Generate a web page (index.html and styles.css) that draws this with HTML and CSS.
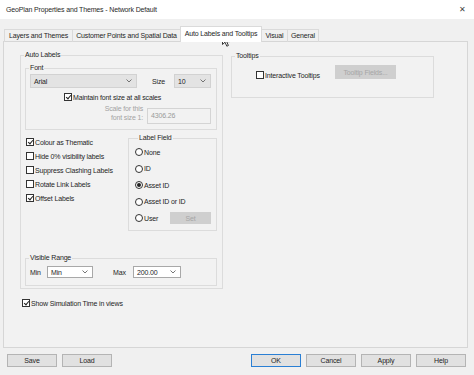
FILE: index.html
```html
<!DOCTYPE html>
<html lang="en">
<head>
  <meta charset="UTF-8">
  <title>GeoPlan Properties and Themes - Network Default</title>
  <link rel="stylesheet" href="styles.css">
</head>
<body>
  <div class="titlebar">
    <span class="title">GeoPlan Properties and Themes - Network Default</span>
    <span class="close">&#x2715;</span>
  </div>

  <div class="tabs">
    <div class="tab tab-layers">Layers and Themes</div>
    <div class="tab tab-customer">Customer Points and Spatial Data</div>
    <div class="tab tab-auto active">Auto Labels and Tooltips</div>
    <div class="tab tab-visual">Visual</div>
    <div class="tab tab-general">General</div>
  </div>

  <div class="panel">
    <div class="col-left">
      <fieldset class="group auto-labels">
        <legend>Auto Labels</legend>

        <fieldset class="group font-group">
          <legend>Font</legend>
          <div class="font-row">
            <div class="combo font-combo"><span>Arial</span><svg class="chev" width="6" height="4" viewBox="0 0 6 4"><polyline points="0.5,0.5 3,3 5.5,0.5" fill="none" stroke="#666" stroke-width="0.9"/></svg></div>
            <span class="size-label">Size</span>
            <div class="combo size-combo"><span>10</span><svg class="chev" width="6" height="4" viewBox="0 0 6 4"><polyline points="0.5,0.5 3,3 5.5,0.5" fill="none" stroke="#666" stroke-width="0.9"/></svg></div>
          </div>
          <div class="check maintain"><span class="box checked"></span>Maintain font size at all scales</div>
          <div class="scale-row">
            <div class="scale-label">Scale for this<br>font size 1:</div>
            <div class="textbox">4306.26</div>
          </div>
        </fieldset>

        <div class="options">
          <div class="checks">
            <div class="check"><span class="box checked"></span>Colour as Thematic</div>
            <div class="check"><span class="box"></span>Hide 0% visibility labels</div>
            <div class="check"><span class="box"></span>Suppress Clashing Labels</div>
            <div class="check"><span class="box"></span>Rotate Link Labels</div>
            <div class="check"><span class="box checked"></span>Offset Labels</div>
          </div>
          <fieldset class="group label-field">
            <legend>Label Field</legend>
            <div class="radio"><span class="dot"></span>None</div>
            <div class="radio"><span class="dot"></span>ID</div>
            <div class="radio"><span class="dot on"></span>Asset ID</div>
            <div class="radio"><span class="dot"></span>Asset ID or ID</div>
            <div class="radio"><span class="dot"></span>User<span class="btn disabled set-btn">Set</span></div>
          </fieldset>
        </div>

        <fieldset class="group range">
          <legend>Visible Range</legend>
          <div class="range-row">
            <span class="min-label">Min</span>
            <div class="combo min-combo white"><span>Min</span><svg class="chev" width="6" height="4" viewBox="0 0 6 4"><polyline points="0.5,0.5 3,3 5.5,0.5" fill="none" stroke="#666" stroke-width="0.9"/></svg></div>
            <span class="max-label">Max</span>
            <div class="combo max-combo white"><span>200.00</span><svg class="chev" width="6" height="4" viewBox="0 0 6 4"><polyline points="0.5,0.5 3,3 5.5,0.5" fill="none" stroke="#666" stroke-width="0.9"/></svg></div>
          </div>
        </fieldset>
      </fieldset>

      <div class="check sim"><span class="box checked"></span>Show Simulation Time in views</div>
    </div>

    <fieldset class="group tooltips">
      <legend>Tooltips</legend>
      <div class="tooltip-row">
        <div class="check interactive"><span class="box"></span>Interactive Tooltips</div>
        <span class="btn disabled fields-btn">Tooltip Fields...</span>
      </div>
    </fieldset>
  </div>

  <div class="footer">
    <span class="btn">Save</span>
    <span class="btn">Load</span>
    <span class="spacer"></span>
    <span class="btn default">OK</span>
    <span class="btn">Cancel</span>
    <span class="btn">Apply</span>
    <span class="btn">Help</span>
  </div>

  <svg class="cursor" width="9" height="13" viewBox="0 0 9 13">
    <path d="M0.5,0.5 L0.5,10.5 L3,8.2 L4.8,12.2 L6.4,11.5 L4.7,7.6 L8,7.6 Z" fill="#fff" stroke="#222" stroke-width="0.9" stroke-linejoin="round"/>
  </svg>
</body>
</html>
```

FILE: styles.css
```css
* {
  box-sizing: border-box;
}

body {
  margin: 0;
  width: 474px;
  height: 375px;
  background-color: #f0f0f0;
  color: #1e1e1e;
  font-family: "Liberation Sans", Arial, sans-serif;
  font-size: 7px;
  letter-spacing: -0.15px;
  position: relative;
  overflow: hidden;
}

.titlebar {
  height: 19px;
  background-color: #fff;
  display: flex;
  align-items: center;
  padding: 0 8px 1px 6px;
}

.title {
  flex: 1;
  color: #2a2a2a;
}

.close {
  font-size: 8px;
  color: #444;
}

/* tabs */
.tabs {
  display: flex;
  align-items: flex-end;
  height: 22px;
  padding-left: 4px;
  position: relative;
  z-index: 1;
}

.tab {
  height: 13px;
  line-height: 12px;
  text-align: center;
  border: 1px solid #dadada;
  border-bottom: none;
  border-right: none;
  margin-bottom: -1px;
}

.tab.active {
  height: 16px;
  line-height: 14px;
  background-color: #fff;
  border-right: 1px solid #dadada;
  margin-bottom: -1px;
}

.tab-layers { width: 68px; }
.tab-customer { width: 108px; }
.tab-auto { width: 82px; }
.tab-visual { width: 25px; border-left: none; }
.tab-general { width: 32px; border-right: 1px solid #dadada; }

.panel {
  width: 465px;
  height: 307px;
  margin-left: 3px;
  border: 1px solid #d6d6d6;
  background-color: #f2f2f2;
  display: flex;
  align-items: flex-start;
  padding: 9px 0 0 16px;
}

/* group boxes */
.group {
  margin: 0;
  padding: 0;
  min-width: 0;
  border: 1px solid #dcdcdc;
}

.group legend {
  padding: 0 1px;
  margin-left: 3px;
  line-height: 8px;
  height: 8px;
}

.auto-labels {
  width: 203px;
  height: 238px;
}

.font-group {
  width: 192px;
  height: 66px;
  margin: 5px 0 0 4px;
}

.font-row {
  display: flex;
  align-items: center;
  margin: 2px 0 0 4px;
}

.combo {
  height: 14px;
  background-color: #e3e3e3;
  border: 1px solid #d2d2d2;
  display: flex;
  align-items: center;
  justify-content: space-between;
  padding: 0 4px 0 3px;
}

.combo.white {
  height: 12px;
  background-color: #fff;
  border-color: #a8a8a8;
}

.font-combo { width: 107px; }
.size-combo { width: 37px; }

.size-label {
  width: 22px;
  margin-left: 15px;
}

.check {
  display: flex;
  align-items: center;
  height: 10px;
  white-space: nowrap;
}

.box {
  width: 8px;
  height: 8px;
  border: 1px solid #333;
  background-color: #fff;
  margin-right: 1px;
  flex-shrink: 0;
  position: relative;
}

.box.checked::after {
  content: "";
  position: absolute;
  left: 2px;
  top: 0;
  width: 2px;
  height: 4px;
  border-right: 1px solid #222;
  border-bottom: 1px solid #222;
  transform: rotate(40deg);
}

.maintain {
  margin: 4px 0 0 38px;
}

.scale-row {
  display: flex;
  align-items: flex-start;
  margin-top: 6px;
}

.scale-label {
  width: 117px;
  text-align: right;
  color: #a3a3a3;
  line-height: 8.5px;
  margin-top: -3px;
}

.textbox {
  width: 64px;
  height: 16px;
  margin-left: 4px;
  border: 1px solid #d4d4d4;
  color: #9a9a9a;
  padding: 3px 0 0 3px;
}

/* checks and label field */
.options {
  display: flex;
  margin: 4px 0 0 5px;
}

.checks {
  width: 102px;
  padding-top: 1px;
}

.checks .check {
  height: 14px;
}

.label-field {
  width: 89px;
  height: 97px;
  padding: 2px 5px 0 6px;
}

.radio {
  display: flex;
  align-items: center;
  height: 16.5px;
}

.dot {
  width: 8px;
  height: 8px;
  border: 1px solid #333;
  border-radius: 50%;
  background-color: #fff;
  margin-right: 1px;
  display: flex;
  align-items: center;
  justify-content: center;
}

.dot.on::after {
  content: "";
  width: 4px;
  height: 4px;
  border-radius: 50%;
  background-color: #222;
}

.btn {
  display: flex;
  align-items: center;
  justify-content: center;
  width: 50px;
  height: 13px;
  background-color: #e1e1e1;
  border: 1px solid #b4b4b4;
}

.btn.disabled {
  background-color: #cfcfcf;
  border-color: #cfcfcf;
  color: #a6a6a6;
}

.set-btn {
  width: 41px;
  height: 12px;
  margin-left: auto;
}

/* visible range */
.range {
  width: 192px;
  height: 32px;
  margin: 23px 0 0 4px;
}

.range-row {
  display: flex;
  align-items: center;
  margin: 4px 0 0 4px;
}

.min-label { width: 17px; }
.min-combo { width: 46px; }
.max-label { width: 20px; margin-left: 20px; }
.max-combo { width: 48px; }

.sim {
  margin: 9px 0 0 2px;
}

/* tooltips */
.tooltips {
  width: 203px;
  height: 46px;
  margin: 1px 0 0 8px;
}

.tooltip-row {
  display: flex;
  align-items: flex-start;
  padding-top: 5px;
}

.interactive {
  width: 79px;
  margin: 5px 0 0 24px;
}

.fields-btn {
  width: 61px;
  height: 14px;
}

/* footer */
.footer {
  display: flex;
  gap: 5px;
  padding: 0 8px 0 7px;
  margin-top: 6px;
}

.spacer {
  flex: 1;
}

.btn.default {
  border-color: #2a7fd4;
}

.cursor {
  position: absolute;
  left: 222px;
  top: 34px;
}
```
